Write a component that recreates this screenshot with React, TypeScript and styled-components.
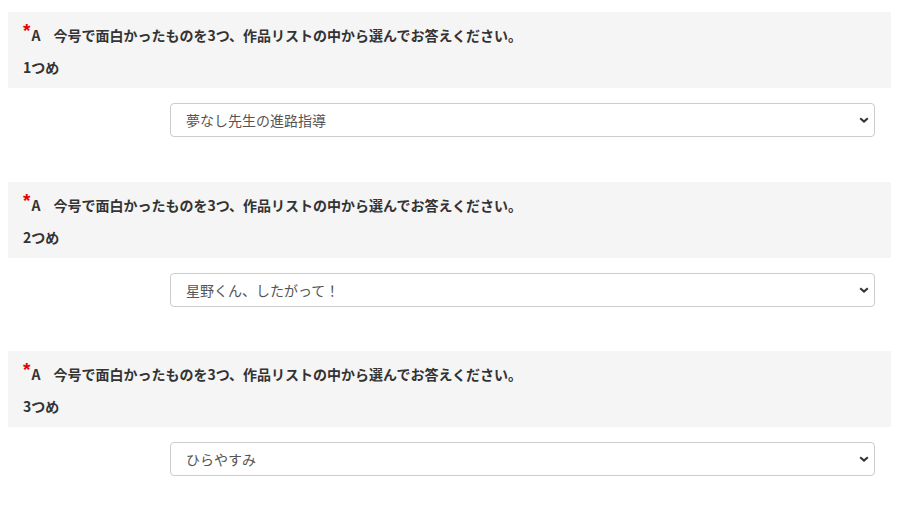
import React from "react";
import styled, { createGlobalStyle } from "styled-components";

const Global = createGlobalStyle`
  body {
    margin: 8px;
    background: #fff;
    font-family: "Noto Sans CJK JP", "Noto Sans", sans-serif;
    color: #333;
  }
`;

const Page = styled.div`
  padding-top: 4px;
  width: 883px;
  display: flex;
  flex-direction: column;
  gap: 44.5px;
`;

const Section = styled.div`
  display: flex;
  flex-direction: column;
  gap: 15px;
`;

const Header = styled.div`
  background: #f5f5f5;
  height: 76px;
  box-sizing: border-box;
  padding: 13px 15px 0;
  display: flex;
  flex-direction: column;
  gap: 12px;
`;

const Question = styled.div`
  font-size: 14px;
  font-weight: bold;
  height: 20px;
  line-height: 20px;
  color: #333;
  white-space: nowrap;
`;

const Required = styled.span`
  color: #e60000;
  font-family: "Liberation Sans", sans-serif;
  font-size: 19px;
  vertical-align: 4px;
  line-height: 0;
  margin-right: 1px;
`;

const Mark = styled.span`
  margin-right: 13px;
`;

const Sub = styled.div`
  font-size: 14px;
  font-weight: bold;
  height: 20px;
  line-height: 20px;
  color: #333;
`;

const SelectRow = styled.div`
  padding-left: 162px;
  width: 705px;
  height: 34px;
  position: relative;
`;

const Select = styled.select`
  appearance: none;
  display: block;
  width: 705px;
  height: 34px;
  border: 1px solid #ccc;
  border-radius: 4px;
  background: #fff;
  padding: 0 30px 0 15px;
  font-family: "Noto Sans CJK JP", "Noto Sans", sans-serif;
  font-size: 14px;
  color: #555;
  outline: none;
`;

const Chevron = styled.svg`
  position: absolute;
  right: 6px;
  top: 14px;
  pointer-events: none;
`;

const items = [
  { n: "1つめ", v: "夢なし先生の進路指導" },
  { n: "2つめ", v: "星野くん、したがって！" },
  { n: "3つめ", v: "ひらやすみ" },
];

export default function App() {
  return (
    <>
      <Global />
      <Page>
        {items.map((it) => (
          <Section key={it.n}>
            <Header>
              <Question>
                <Required>*</Required>
                <Mark>A</Mark>
                今号で面白かったものを3つ、作品リストの中から選んでお答えください。
              </Question>
              <Sub>{it.n}</Sub>
            </Header>
            <SelectRow>
              <Select defaultValue={it.v}>
                <option value={it.v}>{it.v}</option>
              </Select>
              <Chevron width="10" height="6" viewBox="0 0 10 6">
                <path d="M1.2 1.2L5 4.6l3.8-3.4" fill="none" stroke="#333" strokeWidth="2" />
              </Chevron>
            </SelectRow>
          </Section>
        ))}
      </Page>
    </>
  );
}
